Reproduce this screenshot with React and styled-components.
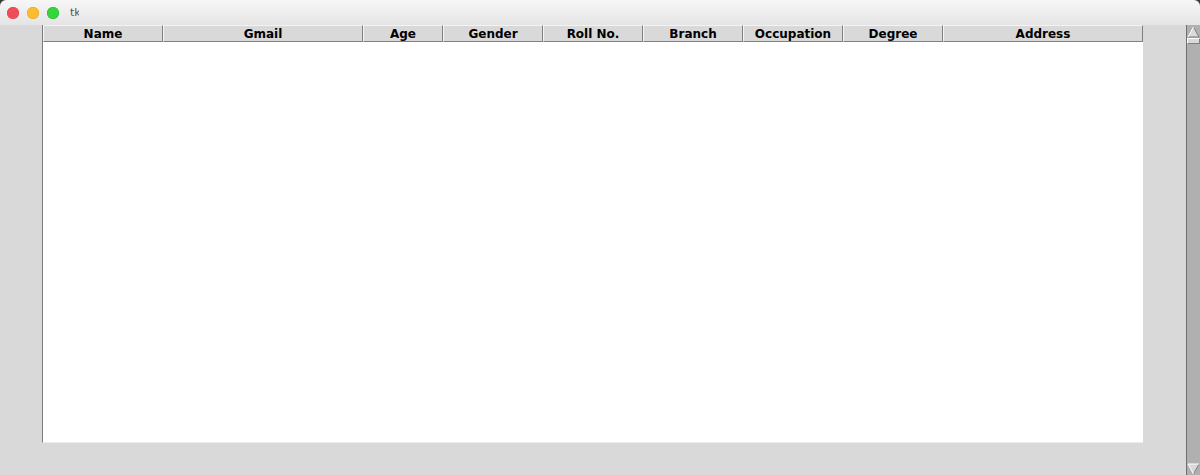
import React from "react";
import styled, { createGlobalStyle } from "styled-components";

const Global = createGlobalStyle`
  html, body { margin: 0; padding: 0; background: #d9d9d9; }
  #root { width: 1200px; height: 475px; }
`;

const Window = styled.div`
  width: 1200px;
  height: 475px;
  overflow: hidden;
  display: flex;
  flex-direction: column;
  background: #3a3a3a;
  font-family: "DejaVu Sans", "Liberation Sans", sans-serif;
`;

const TitleBar = styled.div`
  height: 25px;
  flex: none;
  display: flex;
  align-items: center;
  padding-left: 7px;
  gap: 8px;
  box-sizing: border-box;
  background: linear-gradient(#f7f7f7, #e4e4e4);
  border-radius: 6px 6px 0 0;
`;

const Light = styled.span`
  width: 12px;
  height: 12px;
  border-radius: 50%;
  background: ${(p) => p.$color};
  box-shadow: inset 0 0 0 0.5px ${(p) => p.$edge};
`;

const Title = styled.span`
  margin-left: 3px;
  width: 9px;
  overflow: hidden;
  white-space: nowrap;
  font-size: 11px;
  color: #555;
  font-family: "DejaVu Sans", sans-serif;
`;

const Body = styled.div`
  flex: 1;
  display: flex;
  background: #d9d9d9;
  padding-left: 42px;
`;

const Frame = styled.div`
  width: 1100px;
  height: 417px;
  flex: none;
  border-left: 1px solid #7a7a7a;
  border-bottom: 1px solid #ececec;
  background: #ffffff;
  display: flex;
  flex-direction: column;
`;

const Header = styled.div`
  display: grid;
  grid-template-columns: 120px 200px 80px 100px 100px 100px 100px 100px 200px;
  height: 17px;
`;

const HeadCell = styled.div`
  box-sizing: border-box;
  background: #d9d9d9;
  border-top: 1px solid #f4f4f4;
  border-left: 1px solid #f4f4f4;
  border-right: 1px solid #808080;
  border-bottom: 1px solid #808080;
  padding-top: 1px;
  font-weight: bold;
  font-size: 12px;
  line-height: 14px;
  color: #000;
  text-align: center;
  white-space: nowrap;
`;

const Scrollbar = styled.div`
  margin-left: 43px;
  width: 14px;
  flex: none;
  box-sizing: border-box;
  border-left: 1px solid #707070;
  background: #b0b0b0;
  display: flex;
  flex-direction: column;
  padding-top: 1px;
`;

const ArrowBox = styled.svg`
  display: block;
  width: 13px;
  height: 12px;
  flex: none;
`;

const Thumb = styled.div`
  height: 6px;
  width: 13px;
  box-sizing: border-box;
  background: #d9d9d9;
  border-top: 1px solid #ffffff;
  border-left: 1px solid #ffffff;
  border-bottom: 1px solid #808080;
  border-right: 1px solid #808080;
`;

const Fill = styled.div`
  flex: 1;
`;

const UpArrow = () => (
  <ArrowBox viewBox="0 0 13 12">
    <polygon points="6.5,1 12,11 1,11" fill="#d9d9d9" />
    <polyline points="6.5,1 12,11 1,11" stroke="#808080" strokeWidth="1" fill="none" />
    <polyline points="1,11 6.5,1" stroke="#ffffff" strokeWidth="1" fill="none" />
  </ArrowBox>
);

const DownArrow = () => (
  <ArrowBox viewBox="0 0 13 12">
    <polygon points="1,1 12,1 6.5,11" fill="#d9d9d9" />
    <polyline points="12,1 6.5,11" stroke="#808080" strokeWidth="1" fill="none" />
    <polyline points="6.5,11 1,1 12,1" stroke="#ffffff" strokeWidth="1" fill="none" />
  </ArrowBox>
);

const columns = [
  "Name",
  "Gmail",
  "Age",
  "Gender",
  "Roll No.",
  "Branch",
  "Occupation",
  "Degree",
  "Address",
];

export default function App() {
  return (
    <>
      <Global />
      <Window>
        <TitleBar>
          <Light $color="#f24d56" $edge="#d9434b" />
          <Light $color="#fcbc2f" $edge="#dea123" />
          <Light $color="#34d63c" $edge="#27b22e" />
          <Title>tk</Title>
        </TitleBar>
        <Body>
          <Frame>
            <Header>
              {columns.map((c) => (
                <HeadCell key={c}>{c}</HeadCell>
              ))}
            </Header>
          </Frame>
          <Scrollbar>
            <UpArrow />
            <Thumb />
            <Fill />
            <DownArrow />
          </Scrollbar>
        </Body>
      </Window>
    </>
  );
}
